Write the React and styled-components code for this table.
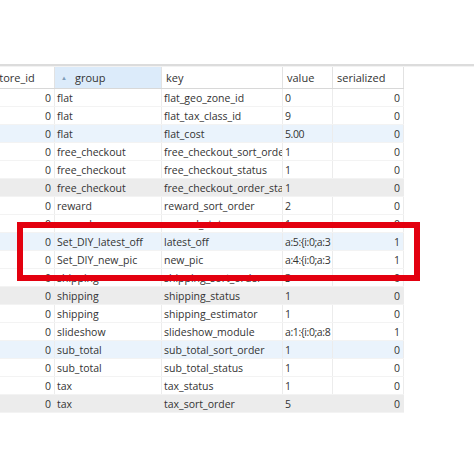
import React from 'react'
import styled, { createGlobalStyle } from 'styled-components'

const Global = createGlobalStyle`
  html, body { margin: 0; padding: 0; background: #fff; }
  body { font-family: "Open Sans", "Liberation Sans", sans-serif; }
`

const cols = '65px 107px 121px 50px 71px'

let rows = [
  { g: 'flat', k: 'flat_geo_zone_id', v: '0', s: '0' },
  { g: 'flat', k: 'flat_tax_class_id', v: '9', s: '0' },
  { g: 'flat', k: 'flat_cost', v: '5.00', s: '0', tone: 'blue' },
  { g: 'free_checkout', k: 'free_checkout_sort_order', v: '1', s: '0' },
  { g: 'free_checkout', k: 'free_checkout_status', v: '1', s: '0' },
  { g: 'free_checkout', k: 'free_checkout_order_status_id', v: '1', s: '0', tone: 'grey' },
  { g: 'reward', k: 'reward_sort_order', v: '2', s: '0' },
  { g: 'reward', k: 'reward_status', v: '1', s: '0' },
  { g: 'Set_DIY_latest_off', k: 'latest_off', v: 'a:5:{i:0;a:3', s: '1', tone: 'blue' },
  { g: 'Set_DIY_new_pic', k: 'new_pic', v: 'a:4:{i:0;a:3', s: '1' },
  { g: 'shipping', k: 'shipping_sort_order', v: '3', s: '0' },
  { g: 'shipping', k: 'shipping_status', v: '1', s: '0', tone: 'grey' },
  { g: 'shipping', k: 'shipping_estimator', v: '1', s: '0' },
  { g: 'slideshow', k: 'slideshow_module', v: 'a:1:{i:0;a:8', s: '1' },
  { g: 'sub_total', k: 'sub_total_sort_order', v: '1', s: '0', tone: 'blue' },
  { g: 'sub_total', k: 'sub_total_status', v: '1', s: '0' },
  { g: 'tax', k: 'tax_status', v: '1', s: '0' },
  { g: 'tax', k: 'tax_sort_order', v: '5', s: '0', tone: 'grey' },
]

const tones = { blue: '#eaf3fc', grey: '#ececec' }

export default function App() {
  return (
    <Page>
      <Global />
      <TopBar />
      <Viewport>
        <Grid>
          <Head>
            <HeadCell>store_id</HeadCell>
            <HeadCell sorted>
              <Arrow>▲</Arrow>group
            </HeadCell>
            <HeadCell>key</HeadCell>
            <HeadCell>value</HeadCell>
            <HeadCell>serialized</HeadCell>
          </Head>
          {rows.map((r, i) => (
            <Row key={i} tone={r.tone}>
              <Cell right>0</Cell>
              <Cell>{r.g}</Cell>
              <Cell>{r.k}</Cell>
              <Cell tight>{r.v}</Cell>
              <Cell right>{r.s}</Cell>
            </Row>
          ))}
        </Grid>
      </Viewport>
      <Marker />
    </Page>
  )
}

const Page = styled.div`
  position: relative;
  width: 474px;
  height: 474px;
  padding-top: 64px;
  box-sizing: border-box;
  overflow: hidden;
`

const TopBar = styled.div`
  height: 2px;
  background: #dcdcdc;
  border-bottom: 1px solid #f2f2f2;
`

const Viewport = styled.div`
  overflow: hidden;
  width: 474px;
`

const Grid = styled.div`
  margin-left: -10px;
  width: max-content;
  font-size: 10.5px;
  color: #333;
`

const Head = styled.div`
  display: grid;
  grid-template-columns: ${cols};
  height: 21px;
  background: #fff;
  border-bottom: 1px solid #d8d8d8;
  font-size: 11px;
`

const HeadCell = styled.div`
  display: flex;
  align-items: center;
  padding: 0 4px;
  border-right: 1px solid #e2e2e2;
  background: ${p => (p.sorted ? '#dcebfa' : '#fff')};
  white-space: nowrap;
  overflow: hidden;
`

const Arrow = styled.span`
  font-size: 6px;
  color: #7f9db9;
  margin: 0 8px 0 2px;
`

const Row = styled.div`
  display: grid;
  grid-template-columns: ${cols};
  height: 18px;
  background: ${p => tones[p.tone] || '#fff'};
  border-bottom: 1px solid #f3f3f3;
  box-sizing: border-box;
`

const Cell = styled.div`
  display: flex;
  align-items: center;
  justify-content: ${p => (p.right ? 'flex-end' : 'flex-start')};
  padding: 0 ${p => (p.right ? '3px' : '2px')};
  border-right: 1px solid #ececec;
  white-space: nowrap;
  overflow: hidden;
  letter-spacing: ${p => (p.tight ? '-0.4px' : 'normal')};
`

const Marker = styled.div`
  position: absolute;
  left: 17px;
  top: 222px;
  width: 403px;
  height: 59px;
  border: 6px solid #e3000f;
  box-sizing: border-box;
`
